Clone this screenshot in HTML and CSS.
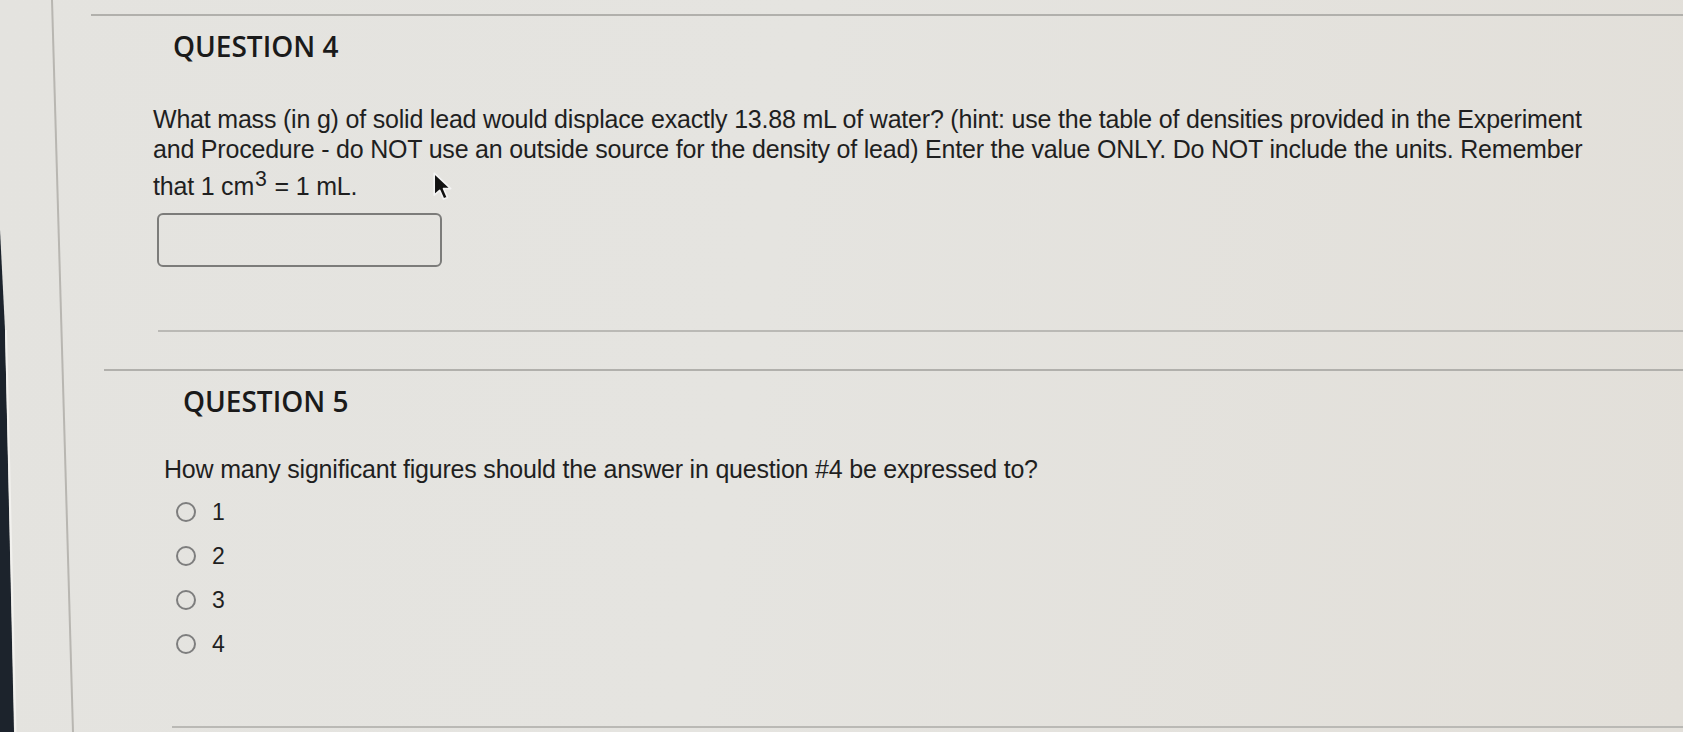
FILE: index.html
```html
<!DOCTYPE html>
<html lang="en">

<head>
    <meta charset="UTF-8">
    <meta name="viewport" content="width=device-width, initial-scale=1.0">
    <title>Test</title>
    <link rel="stylesheet" href="styles.css">
</head>

<body>
    <div class="screen">
        <!-- monitor edge and page gutter seen at the left of the photo -->
        <svg class="screen_edge" width="1683" height="732" viewBox="0 0 1683 732">
            <line x1="52" y1="0" x2="73" y2="732" stroke="#b8b6b1" stroke-width="2" />
            <polygon points="0,230 5,330 14,732 0,732" fill="#1c232c" />
            <line x1="6" y1="330" x2="15.5" y2="732" stroke="#f2f1ee" stroke-width="2" />
        </svg>

        <div class="question">
            <h2 class="question_title">QUESTION 4</h2>
            <p class="question_text">What mass (in g) of solid lead would displace exactly 13.88 mL of water? (hint: use the table of densities provided in the Experiment and Procedure - do NOT use an outside source for the density of lead) Enter the value ONLY. Do NOT include the units. Remember that 1 cm<sup>3</sup> = 1 mL.</p>
            <input class="answer_box" type="text">
            <div class="answer_sep"></div>
        </div>

        <div class="question question_lower">
            <h2 class="question_title">QUESTION 5</h2>
            <p class="question_text">How many significant figures should the answer in question #4 be expressed to?</p>
            <div class="options">
                <label class="option"><input type="radio" name="q5"><span>1</span></label>
                <label class="option"><input type="radio" name="q5"><span>2</span></label>
                <label class="option"><input type="radio" name="q5"><span>3</span></label>
                <label class="option"><input type="radio" name="q5"><span>4</span></label>
            </div>
            <div class="answer_sep"></div>
        </div>

        <svg class="mouse_cursor" width="22" height="31" viewBox="0 0 20 28">
            <path d="M2 1 L2 21 L7 16.5 L10.5 24.5 L14 23 L10.5 15 L17 15 Z" fill="#111" stroke="#f4f4f4" stroke-width="1.5" stroke-linejoin="round" />
        </svg>
    </div>
</body>

</html>
```

FILE: styles.css
```css
body {
    margin: 0px;
    overflow: hidden;
    font-family: "Liberation Sans", Arial, sans-serif;
    color: #1f1f1f;
    background: linear-gradient(100deg, #e4e3df 0%, #e5e4e0 45%, #e2dfd9 100%);
}

.screen {
    position: relative;
    height: 732px;
    padding-top: 14px;
    box-sizing: border-box;
}

.screen_edge {
    position: absolute;
    top: 0px;
    left: 0px;
    pointer-events: none;
}

.question {
    margin-left: 91px;
    border-top: 2px solid #b1b0ac;
}

.question_lower {
    margin-left: 104px;
    margin-top: 37px;
}

.question_title {
    margin: 11px 0px 0px 82px;
    font-family: "Open Sans", sans-serif;
    font-weight: 600;
    font-size: 28px;
    line-height: 38px;
    color: #1a1a1a;
}

.question_lower .question_title {
    margin: 11px 0px 0px 79px;
}

.question_text {
    margin: 39px 0px 0px 62px;
    width: 1460px;
    font-size: 25px;
    line-height: 30px;
    letter-spacing: -0.2px;
}

.question_text sup {
    font-size: 0.85em;
    letter-spacing: 0px;
    margin: 0px 1px;
}

.question_lower .question_text {
    margin: 34px 0px 0px 60px;
}

.answer_box {
    display: block;
    margin: 12px 0px 0px 66px;
    width: 285px;
    height: 54px;
    box-sizing: border-box;
    border: 2px solid #7c7c7a;
    border-radius: 6px;
    background: transparent;
    outline: none;
}

.answer_sep {
    margin: 63px 0px 0px 67px;
    border-top: 2px solid #bab9b5;
}

.options {
    margin: 6px 0px 0px 72px;
}

.option {
    display: flex;
    align-items: center;
    height: 44px;
    gap: 16px;
    font-size: 23px;
}

.option input {
    appearance: none;
    -webkit-appearance: none;
    margin: 0px;
    width: 20px;
    height: 20px;
    border: 2px solid #7e7e7e;
    border-radius: 50%;
    background: transparent;
}

.question_lower .answer_sep {
    margin: 60px 0px 0px 68px;
}

.mouse_cursor {
    position: absolute;
    left: 432px;
    top: 172px;
}
```
